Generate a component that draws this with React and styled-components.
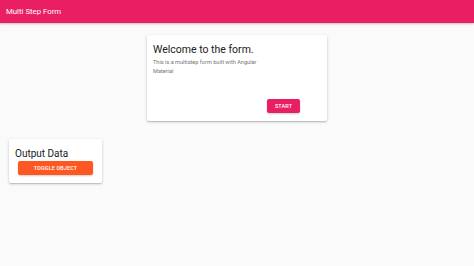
import React, { useState } from 'react';
import styled, { createGlobalStyle } from 'styled-components';

const GlobalStyle = createGlobalStyle`
    html, body {
        margin: 0;
        padding: 0;
        background-color: #fafafa;
        font-family: Roboto, "Liberation Sans", sans-serif;
    }
`;

const Shell = styled.div`
    width: 474px;
    height: 266px;
    display: flex;
    flex-direction: column;
    background-color: #fafafa;
    overflow: hidden;
`;

const Toolbar = styled.header`
    height: 23px;
    flex: none;
    display: flex;
    align-items: center;
    padding: 0 6px;
    background-color: #e91e63;
    color: white;
    font-size: 7.8px;
    box-shadow: 0 1px 2px rgba(0, 0, 0, 0.25);
`;

const Main = styled.main`
    display: flex;
    flex-direction: column;
    padding: 12px 9px 0;
`;

const Card = styled.section`
    background-color: white;
    border-radius: 2px;
    box-shadow: 0 1px 3px rgba(0, 0, 0, 0.2), 0 1px 1px rgba(0, 0, 0, 0.12);
    box-sizing: border-box;
    display: flex;
    flex-direction: column;
`;

const WelcomeCard = styled(Card)`
    align-self: center;
    width: 180px;
    height: 86px;
    padding: 8px 6px 8px;
`;

const OutputCard = styled(Card)`
    align-self: flex-start;
    width: 93px;
    height: 44px;
    margin-top: 18px;
    padding: 8px 6px 0;
`;

const Title = styled.h2`
    margin: 0;
    font-size: ${({ size }) => size}px;
    font-weight: 400;
    color: #212121;
    line-height: 1.3;
`;

const Subtitle = styled.p`
    margin: 1px 0 0;
    max-width: 118px;
    font-size: 5.6px;
    line-height: 9px;
    color: #757575;
`;

const Actions = styled.div`
    margin-top: auto;
    display: flex;
    justify-content: flex-end;
    padding-right: 21px;
`;

const Button = styled.button`
    border: none;
    border-radius: 2px;
    background-color: ${({ color }) => color};
    color: white;
    font-family: inherit;
    font-weight: 500;
    font-size: 5.5px;
    letter-spacing: 0.1px;
    height: 14px;
    padding: 0;
    width: ${({ width }) => width}px;
    cursor: pointer;
    box-shadow: 0 1px 2px rgba(0, 0, 0, 0.2);
`;

const ToggleRow = styled.div`
    display: flex;
    margin-top: 1px;
    padding-left: 3px;
`;

export default function App() {
    const [showObject, setShowObject] = useState(false);

    return (
        <>
            <GlobalStyle />
            <Shell>
                <Toolbar>Multi Step Form</Toolbar>
                <Main>
                    <WelcomeCard>
                        <Title size={10.5}>Welcome to the form.</Title>
                        <Subtitle>This is a multistep form built with Angular Material</Subtitle>
                        <Actions>
                            <Button color="#e91e63" width={33}>START</Button>
                        </Actions>
                    </WelcomeCard>
                    <OutputCard>
                        <Title size={10}>Output Data</Title>
                        <ToggleRow>
                            <Button color="#ff5722" width={75} onClick={() => setShowObject(!showObject)}>
                                TOGGLE OBJECT
                            </Button>
                        </ToggleRow>
                    </OutputCard>
                </Main>
            </Shell>
        </>
    );
}
